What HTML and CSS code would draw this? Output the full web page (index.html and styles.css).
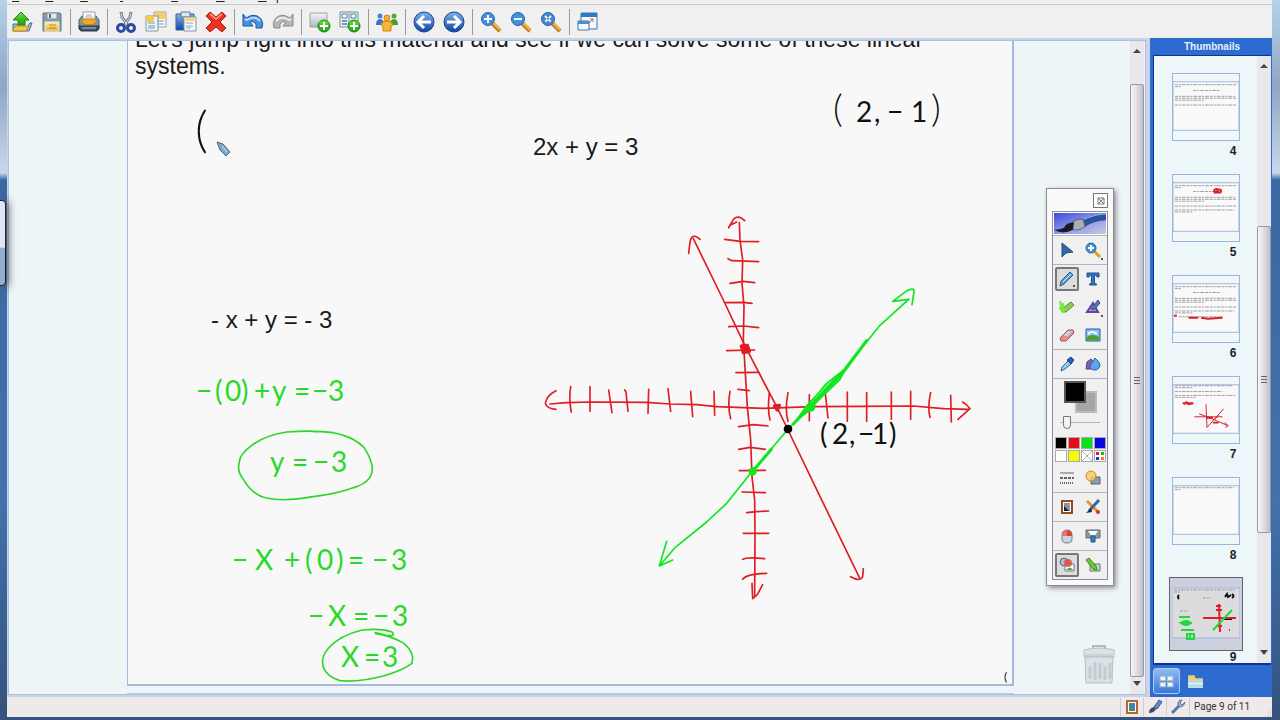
FILE: index.html
```
<!DOCTYPE html>
<html lang="en">
  <head>
    <meta charset="utf-8">
    <title>Notebook</title>
    <link rel="stylesheet" href="styles.css">
  </head>
  <body>
    <svg class="defs" width="0" height="0" aria-hidden="true">
      <defs>
        <linearGradient id="gBlue" x1="0" y1="0" x2="0" y2="1"><stop offset="0" stop-color="#7fb4ea"/><stop offset="1" stop-color="#0d44a8"/></linearGradient>
        <linearGradient id="gGreen" x1="0" y1="0" x2="0" y2="1"><stop offset="0" stop-color="#6fe03c"/><stop offset="1" stop-color="#1c9a10"/></linearGradient>
        <linearGradient id="gGold" x1="0" y1="0" x2="0" y2="1"><stop offset="0" stop-color="#fff3a8"/><stop offset="1" stop-color="#f0ac22"/></linearGradient>
        <linearGradient id="gGrey" x1="0" y1="0" x2="0" y2="1"><stop offset="0" stop-color="#f4f6f8"/><stop offset="1" stop-color="#aeb6be"/></linearGradient>
        <linearGradient id="gBanner" x1="0" y1="0" x2="1" y2="1"><stop offset="0" stop-color="#3d49d8"/><stop offset=".5" stop-color="#8b95ec"/><stop offset="1" stop-color="#c9cbe2"/></linearGradient>
      </defs>
    </svg>

    <nav class="menubar">
      <a href="#"><u>F</u>ile</a>
      <a href="#"><u>E</u>dit</a>
      <a href="#"><u>V</u>iew</a>
      <a href="#"><u>I</u>nsert</a>
      <a href="#">F<u>o</u>rmat</a>
      <a href="#"><u>D</u>raw</a>
      <a href="#"><u>H</u>elp</a>
    </nav>

    <div class="toolbar">
      <button aria-label="Open"><svg viewBox="0 0 22 22"><path d="M2 13h4l2 3h8l3-4h2l-3 8H2z" fill="#8fc4ec" stroke="#3a6f9f"/><path d="M2 18l3-3h13l-3 5H2z" fill="#f5c84a" stroke="#bb8a1c"/><path d="M10 1l8 8h-4v5H7V9H2z" fill="url(#gGreen)" stroke="#1b8a12"/></svg></button>
      <button aria-label="Save"><svg viewBox="0 0 22 22"><path d="M2 2h17l1 1v17H2z" fill="#8b9dad" stroke="#5f7383"/><path d="M6 2h10v6H6z" fill="#dfe8ef" stroke="#7d90a0"/><path d="M8 3h2v4H8z" fill="#54697b"/><path d="M4 11h14v9H4z" fill="url(#gGold)" stroke="#e8edf0"/><path d="M8 14h7M8 17h7" stroke="#b88a2c"/></svg></button>
      <span class="sep"></span>
      <button aria-label="Print"><svg viewBox="0 0 22 22"><path d="M1 9l3-4h14l3 4v7H1z" fill="#7d98ae" stroke="#3f5c74"/><path d="M5 1h12v10H5z" fill="#fff" stroke="#8ba0b1"/><path d="M8 4h6M7 6h8" stroke="#a0a8ae"/><path d="M4 8h14v4q-7 4-14 0z" fill="#f2a82d" stroke="#c37c10"/><path d="M1 15h20v3l-2 2H3l-2-2z" fill="#3e5063" stroke="#293a4a"/><path d="M4 17h14" stroke="#b7c5d0"/></svg></button>
      <span class="sep"></span>
      <button aria-label="Cut"><svg viewBox="0 0 22 22"><path d="M6 1l1 5 7 10M16 1l-1 5-7 10" fill="none" stroke="#6b7b89" stroke-width="3"/><path d="M6 2l1 4 6 9M16 2l-1 4-6 9" fill="none" stroke="#e0e8ee"/><circle cx="6" cy="17" r="3.5" fill="none" stroke="#2a49a5" stroke-width="3"/><circle cx="16" cy="17" r="3.5" fill="none" stroke="#2a49a5" stroke-width="3"/></svg></button>
      <button aria-label="Copy"><svg viewBox="0 0 22 22"><path d="M9 1h12v15H9z" fill="#fbfbf4" stroke="#8d9cab"/><path d="M9 2h12v6H9z" fill="#f8cf58"/><path d="M1 5h12v15H1z" fill="#eef4f9" stroke="#8596a6"/><path d="M1 5h8v6H1z" fill="#f5c94e"/><path d="M3 12h7M3 15h7M3 17h7M12 10h7M12 13h7" stroke="#6f9cc7"/></svg></button>
      <button aria-label="Paste"><svg viewBox="0 0 22 22"><path d="M1 3h18v16H1z" fill="url(#gBlue)" stroke="#33629a"/><path d="M6 1h9v5H6z" fill="#dfe6ec" stroke="#657789"/><path d="M9 6h12v14H9z" fill="#f6f9fc" stroke="#8192a2"/><path d="M9 7h12v3H9z" fill="#f5d67b"/><path d="M11 12h7M11 15h7M11 17h5" stroke="#85a8ca"/></svg></button>
      <button aria-label="Delete"><svg viewBox="0 0 22 22"><path d="M5 1l6 5 6-5 4 4-6 6 6 6-4 4-6-5-6 5-4-4 6-6-6-6z" fill="#e83226" stroke="#b81a14"/><path d="M5 3l6 5 6-5" fill="none" stroke="#ff8a72" stroke-width="2"/></svg></button>
      <span class="sep"></span>
      <button aria-label="Undo"><svg viewBox="0 0 22 22"><path d="M1 3l3 4q9-6 15 1 3 4 1 9h-6q1-5-2-6-2-1-4 0l3 4H1z" fill="#4b8fe0" stroke="#1c54a8"/><path d="M3 8l2 1q8-5 13 1" fill="none" stroke="#b4d8fa" stroke-width="2"/></svg></button>
      <button aria-label="Redo"><svg viewBox="0 0 22 22"><path d="M21 3l-3 4Q9 1 3 8q-3 4-1 9h6q-1-5 2-6 2-1 4 0l-3 4h10z" fill="#b4b7ba" stroke="#85898d"/><path d="M19 8l-2 1Q9 4 4 10" fill="none" stroke="#e8eaec" stroke-width="2"/></svg></button>
      <span class="sep"></span>
      <button aria-label="Add page"><svg viewBox="0 0 22 22"><path d="M1 2h17v14H1z" fill="url(#gGrey)" stroke="#9aa2a9"/><circle cx="15" cy="15" r="6" fill="url(#gGreen)" stroke="#158a12"/><path d="M15 11v8M11 15h8" stroke="#fff" stroke-width="2"/></svg></button>
      <button aria-label="Add columns"><svg viewBox="0 0 22 22"><path d="M1 1h18v15H1z" fill="#f1f4f6" stroke="#7d8a95"/><path d="M3 3h5v4H3zM12 3h5v4h-5z" fill="#fff" stroke="#3f83a8"/><path d="M3 10h5M3 13h5M12 10h5" stroke="#6c98b0" stroke-width="2"/><path d="M10 1v15" stroke="#7d8a95"/><circle cx="15" cy="15" r="6" fill="url(#gGreen)" stroke="#158a12"/><path d="M15 11v8M11 15h8" stroke="#fff" stroke-width="2"/></svg></button>
      <span class="sep"></span>
      <button aria-label="Meeting"><svg viewBox="0 0 22 22"><circle cx="4" cy="5" r="2.500" fill="#4a7fd0"/><path d="M0 14q0-6 4-6 3 0 4 4l-1 2z" fill="#3f72c4"/><circle cx="18" cy="5" r="2.500" fill="#52a83e"/><path d="M22 14q0-6-4-6-3 0-4 4l1 2z" fill="#45a032"/><circle cx="11" cy="7" r="3" fill="#f5b030" stroke="#d1840f"/><path d="M5 14q1-4 6-4t6 4l-2 1v5H7v-5z" fill="#f6b637" stroke="#d1840f"/></svg></button>
      <span class="sep"></span>
      <button aria-label="Previous page"><svg viewBox="0 0 22 22"><circle cx="11" cy="11" r="10" fill="url(#gBlue)" stroke="#1c3f8c"/><path d="M18 11H6M11 5l-6 6 6 6" fill="none" stroke="#fff" stroke-width="3"/></svg></button>
      <button aria-label="Next page"><svg viewBox="0 0 22 22"><circle cx="11" cy="11" r="10" fill="url(#gBlue)" stroke="#1c3f8c"/><path d="M4 11h12M11 5l6 6-6 6" fill="none" stroke="#fff" stroke-width="3"/></svg></button>
      <span class="sep"></span>
      <button aria-label="Zoom in"><svg viewBox="0 0 22 22"><path d="M12 12l8 8" stroke="#b9771a" stroke-width="4"/><path d="M13 12l7 7" stroke="#f8b83c" stroke-width="2"/><circle cx="8" cy="8" r="6.500" fill="#3f92e0" stroke="#2a62a4"/><path d="M8 4v8M4 8h8" stroke="#fff" stroke-width="2"/></svg></button>
      <button aria-label="Zoom out"><svg viewBox="0 0 22 22"><path d="M12 12l8 8" stroke="#b9771a" stroke-width="4"/><path d="M13 12l7 7" stroke="#f8b83c" stroke-width="2"/><circle cx="8" cy="8" r="6.500" fill="#3f92e0" stroke="#2a62a4"/><path d="M4 8h8" stroke="#fff" stroke-width="2"/></svg></button>
      <button aria-label="Fit page"><svg viewBox="0 0 22 22"><path d="M12 12l8 8" stroke="#b9771a" stroke-width="4"/><path d="M13 12l7 7" stroke="#f8b83c" stroke-width="2"/><circle cx="8" cy="8" r="6.500" fill="#3f88d4" stroke="#2a62a4"/><path d="M5 5l6 6M11 5l-6 6" stroke="#fff" stroke-width="2" stroke-dasharray="3 2"/></svg></button>
      <span class="sep"></span>
      <button aria-label="Transparent background"><svg viewBox="0 0 22 22"><path d="M4 2h16v16H4z" fill="#f5f9fc" stroke="#3574b4"/><path d="M4 2h16v4H4z" fill="#2e7ac4"/><path d="M1 10h11v9H1z" fill="#f5f9fc" stroke="#3574b4"/><path d="M1 10h11v3H1z" fill="#4a8fd0"/><path d="M12 12l4-4M13 8h3v3" fill="none" stroke="#e0562a"/></svg></button>
    </div>

    <main>
      <section class="workspace">
        <div class="board">
          <div class="page">
            <p class="intro">Let's jump right into this material and see if we can solve some of these linear systems.</p>
            <p class="eq eq-first">2x + y = 3</p>
            <p class="eq eq-second">- x + y = - 3</p>

            <svg class="ink" viewBox="0 0 884 643">
              <!-- pen answers -->
              <g class="pen black">
                <text x="67" y="106" class="tall">(</text>
                <text y="81"><tspan x="705" class="paren">(</tspan><tspan x="728">2</tspan><tspan x="746">,</tspan><tspan x="759">−</tspan><tspan x="783">1</tspan><tspan x="803" class="paren">)</tspan></text>
                <text y="403"><tspan x="692">(</tspan><tspan x="704">2</tspan><tspan x="721">,</tspan><tspan x="730">−</tspan><tspan x="744">1</tspan><tspan x="761">)</tspan></text>
                <text x="876" y="640" class="small">(</text>
              </g>
              <g class="pen green">
                <text y="360"><tspan x="68">−</tspan><tspan x="87">(</tspan><tspan x="97">0</tspan><tspan x="113">)</tspan><tspan x="126">+</tspan><tspan x="144">y</tspan><tspan x="166">=</tspan><tspan x="184">−</tspan><tspan x="200">3</tspan></text>
                <text y="431"><tspan x="142">y</tspan><tspan x="164">=</tspan><tspan x="185">−</tspan><tspan x="203">3</tspan></text>
                <text y="529"><tspan x="104">−</tspan><tspan x="127">X</tspan><tspan x="156">+</tspan><tspan x="177">(</tspan><tspan x="189">0</tspan><tspan x="208">)</tspan><tspan x="220">=</tspan><tspan x="244">−</tspan><tspan x="263">3</tspan></text>
                <text y="585"><tspan x="180">−</tspan><tspan x="200">X</tspan><tspan x="225">=</tspan><tspan x="245">−</tspan><tspan x="264">3</tspan></text>
                <text y="626"><tspan x="213">X</tspan><tspan x="236">=</tspan><tspan x="254">3</tspan></text>
              </g>

              <!-- rings round the two intercepts -->
              <svg x="52" y="329" width="260" height="320" viewBox="0 0 780 960">
                <g class="stroke ring">
                  <path d="M460 188Q400 180 320 186Q260 194 215 226Q178 254 178 276Q170 304 190 328Q218 376 260 384Q310 396 400 380Q470 372 524 352Q574 336 577 300Q578 272 552 232Q524 206 490 196Q450 182 400 185"/>
                  <path d="M586 788L618 796Q650 800 636 786Q606 774 546 780Q480 796 446 834Q420 862 430 892Q440 920 480 932Q534 938 610 918Q670 900 696 880Q706 850 672 820Q640 800 586 790"/>
                </g>
              </svg>

              <!-- axes and the two lines -->
              <svg x="402" y="159" width="460" height="410" viewBox="0 0 1380 1230">
                <g class="stroke red">
                  <path d="M628 68L630 120 638 180 636 250 642 320 640 420 646 520 652 620 662 720 666 830 674 900 675 1000 674 1190"/>
                  <path d="M596 84L600 76 620 66M596 82L612 56Q626 44 644 62M666 1150L668 1196 682 1184 698 1154"/>
                  <path d="M60 612L110 608 180 606 350 607 420 612 500 614 560 620 700 625 850 620 1000 619 1150 618 1240 626 1316 628"/>
                  <path d="M78 572Q50 586 46 610Q50 626 78 628M1298 606Q1312 614 1320 626L1284 658"/>
                  <path d="M584 118L630 124 686 125M594 176L606 182 686 185M600 250L640 244 674 248M586 308L640 307 666 310M596 380L640 378 686 383M590 452L674 450M618 518L686 517M624 568L658 572M626 680L670 674 714 678M626 748L660 742 706 748M628 812L706 811M636 876L706 878M650 938L680 935 716 933M640 1000L716 1000M638 1078Q650 1070 704 1076M638 1138Q650 1122 710 1120"/>
                  <path d="M122 560Q116 600 124 636M180 560V634M236 570L246 638M284 570L288 576 294 634M356 568L354 640M414 566L422 634M482 574L488 650M552 574L554 646M600 574Q592 620 602 656M718 580Q712 630 720 660M774 578Q764 630 774 664M838 584V662M886 580L894 654M952 576V664M1010 578V664M1084 576V658M1142 574V658M1202 578Q1192 620 1200 652M1262 586L1264 666"/>
                  <path d="M490 116L580 300 646 440 740 620 774 690 880 910 988 1132"/>
                  <path d="M476 160L480 126Q486 96 510 118M962 1130Q990 1146 998 1130L1000 1106"/>
                  <path d="M634 438L652 436 658 454 640 458zM734 618L748 616 742 630z" class="blob"/>
                </g>
                <g class="stroke green">
                  <path d="M1136 298L1050 376 1000 438 940 520 840 620 774 688 668 812 590 910 530 966 436 1042 390 1096"/>
                  <path d="M1136 298L1088 304 1128 274Q1154 260 1152 276L1146 314M410 1024L388 1098 428 1080"/>
                  <path d="M856 590L890 550 946 506 930 538 860 606 838 632 800 660 828 620z" class="half"/>
                  <path d="M1010 422L940 514 850 608 790 672M724 748L668 814" class="wide"/>
                  <circle cx="842" cy="622" r="11"/><circle cx="668" cy="814" r="10"/>
                </g>
                <circle cx="774" cy="687" r="13"/>
              </svg>

              <!-- pen cursor -->
              <path d="M89 101l6 2 7 8-4 4-6-6z" fill="#7fa6c4" stroke="#456b86"/>
              <path d="M94 105l5 6" stroke="#dbe8f2"/>
            </svg>
          </div>
          <div class="next-page"></div>
        </div>

        <svg class="trash" viewBox="0 0 32 42"><path d="M10 5V2h12v3" fill="none" stroke="#b3bcc1" stroke-width="2"/><path d="M1 6q15-4 30 0v7H1z" fill="#dce3e6" stroke="#b3bdc3"/><path d="M2 13h28l-1 26H3z" fill="#dbe2e6" stroke="#b5bfc5"/><path d="M2 11h28" stroke="#b9c3c8"/><path d="M7 22v13M12 18v18M17 19v16M22 22v14M27 19v16" stroke="#c3ccd1" stroke-width="3"/></svg>

        <div class="toolbox">
          <button class="close" aria-label="Close"><svg viewBox="0 0 8 8"><path d="M1 1h6v6H1zM1 1l6 6M7 1L1 7" fill="none" stroke="#777"/></svg></button>
          <div class="tools">
            <svg class="banner" viewBox="0 0 52 20" preserveAspectRatio="none"><path d="M0 0h52v20H0z" fill="url(#gBanner)"/><path d="M27 7Q38 1 52 0v7Q38 8 30 14z" fill="#2d51a0"/><path d="M17 10q5-5 12-4l2 7q-6 4-12 3z" fill="#aaaeb8" stroke="#686c78"/><path d="M20 9q-8 0-10 5-4 2-10 2 9 5 19 0z" fill="#191c25"/><path d="M30 6Q42 1 52 1" fill="none" stroke="#9bbdf0"/></svg>
            <div class="group">
              <button aria-label="Select"><svg viewBox="0 0 16 16"><path d="M3 1l11 9-7 1-4 4z" fill="#2e6ba8" stroke="#1e4a7c"/></svg></button>
              <button aria-label="Magnify" class="more"><svg viewBox="0 0 16 16"><path d="M9 9l6 6" stroke="#e59a20" stroke-width="3"/><circle cx="6" cy="6" r="5" fill="#3f92e0" stroke="#2a62a4"/><path d="M6 3v6M3 6h6" stroke="#fff" stroke-width="2"/></svg></button>
            </div>
            <div class="group">
              <button aria-label="Pen" class="on more"><svg viewBox="0 0 16 16"><path d="M1 15l1-5 9-9 3 3-9 9z" fill="#5c9dd6" stroke="#2a5d8e"/><path d="M4 11l8-8" stroke="#d8ecfa"/></svg></button>
              <button aria-label="Text"><svg viewBox="0 0 16 16"><path d="M2 2h12v4h-2l-1-2H9.500v8l2 1v1h-7v-1l2-1V4H5L4 6H2z" fill="#2f78c0" stroke="#1d5492"/></svg></button>
              <button aria-label="Creative pen"><svg viewBox="0 0 16 16"><path d="M3 13l1-4 8-6 3 3-8 7z" fill="#88cc50" stroke="#4f9428"/><path d="M1 2l3 12M4 4l1 9M0 8l4 5" stroke="#74e83a" stroke-width="2"/></svg></button>
              <button aria-label="Shape pen" class="more"><svg viewBox="0 0 16 16"><path d="M2 13L8 4l5 9z" fill="#b9a4cc" stroke="#693f98" stroke-width="2"/><path d="M6 10l7-9 2 3-6 7z" fill="#4d75c0" stroke="#334f8c"/></svg></button>
              <button aria-label="Eraser"><svg viewBox="0 0 16 16"><path d="M1 11l8-8h5l1 3-8 8H2z" fill="#e58d8d" stroke="#9c5a5a"/><path d="M9 4h5l-5 5H4z" fill="#c9ced2"/></svg></button>
              <button aria-label="Picture"><svg viewBox="0 0 16 16"><path d="M1 2h14v12H1z" fill="#85c2f2" stroke="#2a5f94"/><path d="M2 10q6-4 12 0v3H2z" fill="#4da02c"/><path d="M3 7q4-4 9 0" stroke="#fff" fill="none" stroke-width="2"/></svg></button>
            </div>
            <div class="group">
              <button aria-label="Eyedropper"><svg viewBox="0 0 16 16"><path d="M2 15l1-4 6-6 3 3-6 5z" fill="#9cc8ee" stroke="#34659a"/><path d="M8 4l4-3 3 3-3 4z" fill="#2b63b0" stroke="#1b4686"/></svg></button>
              <button aria-label="Fill"><svg viewBox="0 0 16 16"><path d="M1 13l1-7 4-3 3 4-3 6z" fill="#8160a8" stroke="#5a3c80"/><path d="M10 2q5 4 5 7-1 5-5 5-5 0-5-4 2-3 5-8z" fill="#5da4e8" stroke="#2862a4"/></svg></button>
            </div>
            <div class="colours">
              <button class="current" aria-label="Line colour"></button>
              <button class="second" aria-label="Fill colour"></button>
            </div>
            <input type="range" class="width" aria-label="Line width" min="0" max="10" value="1">
            <div class="palette">
              <button class="c-black" aria-label="Black"></button>
              <button class="c-red" aria-label="Red"></button>
              <button class="c-green" aria-label="Green"></button>
              <button class="c-blue" aria-label="Blue"></button>
              <button class="c-white" aria-label="White"></button>
              <button class="c-yellow" aria-label="Yellow"></button>
              <button class="c-none" aria-label="No colour"><svg viewBox="0 0 10 10"><path d="M0 0l10 10M10 0L0 10" stroke="#b2b2b2"/></svg></button>
              <button class="c-more" aria-label="More colours"><svg viewBox="0 0 10 10"><path d="M1 1h3v3H1z" fill="#e02020"/><path d="M6 1h3v3H6z" fill="#20b030"/><path d="M1 6h3v3H1z" fill="#2030d0"/><path d="M6 6h3v3H6z" fill="#f08020"/></svg></button>
            </div>
            <div class="group">
              <button aria-label="Line style"><svg viewBox="0 0 16 16"><path d="M1 3h14" stroke="#666"/><path d="M1 8h14" stroke="#666" stroke-width="2" stroke-dasharray="3 1"/><path d="M1 13h14" stroke="#666" stroke-width="2" stroke-dasharray="1 1"/></svg></button>
              <button aria-label="Shapes"><svg viewBox="0 0 16 16"><path d="M6 7h9v7H6z" fill="#8b9fb4" stroke="#4f6477"/><circle cx="6" cy="6" r="5" fill="#f7cd60" stroke="#c38c20" fill-opacity=".8"/></svg></button>
            </div>
            <div class="group">
              <button aria-label="Gallery"><svg viewBox="0 0 16 16"><path d="M3 2h10v12H3z" fill="#fff" stroke="#8d4d1e" stroke-width="2"/><path d="M5 4h6v8H5z" fill="#6d97c4"/><path d="M5 7l5 5H5z" fill="#222"/><path d="M8 5h3v4z" fill="#f09030"/></svg></button>
              <button aria-label="Draw tools"><svg viewBox="0 0 16 16"><path d="M2 2l11 11" stroke="#e79520" stroke-width="3"/><path d="M14 1L4 12" stroke="#2f66a8" stroke-width="3"/><path d="M6 9l-5 5 6-1z" fill="#1e2f44"/><circle cx="13" cy="13" r="2" fill="#d8342a"/></svg></button>
            </div>
            <div class="group">
              <button aria-label="Mouse"><svg viewBox="0 0 16 16"><path d="M3 7q0-5 5-5t5 5v4q0 4-5 4t-5-4z" fill="#c8d6e4" stroke="#6a7c8e"/><path d="M3 8q0-6 5-6v6z" fill="#ec7460"/><path d="M8 8V2q5 0 5 6z" fill="#d84432"/></svg></button>
              <button aria-label="Capture"><svg viewBox="0 0 16 16"><path d="M1 2h14v8H1z" fill="#8d999f" stroke="#616d75"/><path d="M3 3h10l-3 4H6z" fill="#fff"/><path d="M6 8h4v6H6z" fill="#3282c4" stroke="#17588e"/></svg></button>
            </div>
            <div class="group">
              <button aria-label="Object mode" class="on"><svg viewBox="0 0 16 16"><path d="M6 7h9v7H6z" fill="#fff" stroke="#697783"/><path d="M7 13q4-5 7 0z" fill="#48b030"/><circle cx="5" cy="5" r="4" fill="#aabbc9" stroke="#5a6d7c"/><circle cx="9" cy="6" r="4" fill="#d84e44" fill-opacity=".85"/></svg></button>
              <button aria-label="Ink mode"><svg viewBox="0 0 16 16"><path d="M5 7h10v7H5z" fill="#c7d4c7" stroke="#697783"/><path d="M1 3l3-2 7 8 1 4-4-1z" fill="#6cc838" stroke="#3a8a1a"/></svg></button>
            </div>
          </div>
        </div>

        <div class="scroll main-scroll"><span class="up"></span><div class="track"><span class="bar"></span></div><span class="down"></span></div>
      </section>

      <aside class="side">
        <h2>Thumbnails</h2>
        <div class="pane">
          <ol class="thumbs">
            <li><svg viewBox="0 0 68 68"><path class="sheet" d="M0 8h68v50H0z"/><path class="type" d="M2 11h64M2 13h6M21 17h28M2 23h62M2 25h64M2 27h31M2 32h63"/></svg><span>4</span></li>
            <li><svg viewBox="0 0 68 68"><path class="sheet" d="M0 8h68v50H0z"/><path class="type" d="M2 11h64M2 13h6M21 17h28M2 23h62M2 25h64M2 27h31M2 32h63M2 36h61M2 38h18"/><path class="mark" d="M42 17q1-4 5-2 4 0 2 3h-7l5-2"/></svg><span>5</span></li>
            <li><svg viewBox="0 0 68 68"><path class="sheet" d="M0 8h68v50H0z"/><path class="type" d="M2 11h64M2 13h6M21 17h28M2 23h62M2 25h64M2 27h31M2 32h63M2 36h61M2 38h18M6 42h45"/><path class="mark" d="M1 41h3M16 43h10M29 43l7 1 15-1"/></svg><span>6</span></li>
            <li><svg viewBox="0 0 68 68"><path class="sheet" d="M0 8h68v50H0z"/><path class="type" d="M2 9h60M2 11h18M2 15h49M2 19h62M2 21h21"/><path class="mark" d="M10 27h11M11 28l3-2 2 2 5-1M34 42h7M41 47h6"/><path class="mark thin" d="M34 28l1 24M22 41h29M35 52l17-19M27 38l11 4 18 8M53 47l4 3-3 2M43 44l4-5"/></svg><span>7</span></li>
            <li><svg viewBox="0 0 68 68"><path class="sheet" d="M0 8h68v50H0z"/><path class="type" d="M2 10h61M2 12h6"/></svg><span>8</span></li>
            <li class="current"><svg viewBox="0 0 68 68"><path class="sheet" d="M0 8h68v50H0z"/><path class="type" d="M2 10h61M2 12h6M31 18h8M8 31h8"/><path d="M7 15q-2 2 0 4M53 17l2-3 1 3 3-2M60 14q3 2 0 4M52 39h8" fill="none" stroke="#111" stroke-width="2"/><path class="mark" d="M31 38h33M47 24l1 28M44 26h5M44 30h6M45 46h5M57 50h1"/><path class="mark lime" d="M41 50l19-20M7 37h11M9 43q5-4 10 0-5 4-10 0h9M9 50h13M15 54h7v5h-7zM18 54v5"/></svg><span>9</span></li>
          </ol>
          <div class="scroll side-scroll"><span class="up"></span><div class="track"><span class="bar"></span></div><span class="down"></span></div>
        </div>
        <div class="tabs">
          <button class="on" aria-label="Page sorter"><svg viewBox="0 0 16 16"><path d="M2 3h5v4H2zM9 3h5v4H9zM2 9h5v4H2zM9 9h5v4H9z" fill="#f3f8ee" stroke="#a9c0d8"/></svg></button>
          <button aria-label="Gallery"><svg viewBox="0 0 16 16"><path d="M1 2h6l1 3h7v9H1z" fill="#e8d272"/><path d="M1 7h14v7H1z" fill="#b8dcf0"/><path d="M1 10h14" stroke="#eef8fc"/></svg></button>
        </div>
      </aside>
    </main>

    <footer class="status">
      <button aria-label="Gallery"><svg viewBox="0 0 16 16"><path d="M3 2h10v12H3z" fill="#fff" stroke="#b5682a" stroke-width="2"/><path d="M5 4h6v8H5z" fill="#3f86b8"/><path d="M5 8l5 4H5z" fill="#2c9a50"/></svg></button>
      <button aria-label="Pens"><svg viewBox="0 0 16 16"><path d="M7 8l5-7 3 2-5 7z" fill="#5e88d8" stroke="#34559c"/><path d="M2 14q0-5 5-6l2 2q-2 4-7 4z" fill="#404a5c"/></svg></button>
      <button aria-label="Settings"><svg viewBox="0 0 16 16"><path d="M2 14l7-7" stroke="#58799b" stroke-width="3"/><path d="M15 3l-3 3-2-2 2-3q-5 0-4 6 5 3 7-4z" fill="#9ab3ca" stroke="#58799b"/></svg></button>
      <span class="count">Page 9 of 11</span>
      <svg class="grip" viewBox="0 0 8 8"><path d="M6 1h1M4 4h1M6 4h1M1 7h1M4 7h1M6 7h1" stroke="#b9b3b5"/></svg>
    </footer>

    <div class="drawer"></div>
  </body>
</html>
```
FILE: styles.css
```
* {box-sizing: border-box; margin: 0; padding: 0;}
body {
  display: flex;
  flex-direction: column;
  position: relative;
  height: 100vh;
  overflow: hidden;
  padding: 0 8px 3px 7px;
  background: linear-gradient(#b4d2ea, #8fa6c4 12%, #c8d8ea 24%, #3a68a2 25%, #4271ac 70%, #34537c);
  font-family: "Liberation Sans", Arial, sans-serif;
}
button {border: 0; background: none; display: flex; align-items: center; justify-content: center;}
ol {list-style: none;}
.defs {position: absolute;}

.menubar {
  display: flex;
  align-items: flex-end;
  gap: 14px;
  flex: none;
  height: 4px;
  padding-left: 5px;
  overflow: hidden;
  background: #f0f0f0;
}
.menubar a {font-size: 12px; line-height: 16px; color: #222; text-decoration: none;}

.toolbar {
  display: flex;
  align-items: center;
  flex: none;
  height: 34px;
  border-top: 1px solid #c9c9c9;
  background: #f0f0f0;
}
.toolbar button {width: 30px; height: 30px;}
.toolbar svg {width: 22px; height: 22px;}
.sep {width: 1px; height: 26px; margin: 0 3px; background: #999;}

main {
  display: flex;
  flex: 1;
  min-height: 0;
  background: #cbd3e8;
}
.workspace {
  display: flex;
  position: relative;
  flex: 1;
  margin: 2px 4px 2px 1px;
  border: 1px solid #a9bfe6;
  background: #edf5f7;
}
.board {
  display: flex;
  flex-direction: column;
  flex: 1;
  padding: 0 116px 0 118px;
}
.page {
  position: relative;
  flex: 1;
  overflow: hidden;
  border: solid #a5b9dc;
  border-width: 0 2px 2px 1px;
  background: #f8f8f8;
}
.next-page {height: 8px; border-bottom: 1px solid #b9cae6;}
.intro, .eq {line-height: 27px; color: #1a1a1a;}
.intro {margin-top: -15px; padding: 0 60px 0 7px; font-size: 23px;}
/* objects dropped on the page */
.eq {position: absolute; font-size: 24px; white-space: nowrap;}
.eq-first {left: 405px; top: 92px;}
.eq-second {left: 83px; top: 265px;}
.ink {position: absolute; left: 0; top: 0; width: 884px; height: 643px;}

.pen {font-family: Lato, "Liberation Sans", sans-serif; font-size: 28px; font-weight: 400;}
.pen.black {fill: #111;}
.pen.green {fill: #2ad82a;}
.pen .tall {font-size: 50px; font-weight: 300;}
.pen .paren {font-size: 38px; font-weight: 300;}
.pen .small {font-size: 12px;}
.stroke {fill: none; stroke-width: 5; stroke-linecap: round; stroke-linejoin: round;}
.stroke.ring {stroke: #2ad82a;}
.stroke.red {stroke: #e01c24;}
.stroke.green {stroke: #0be81c;}
.stroke .blob {fill: #f01018; stroke-width: 10;}
.stroke .half {fill: #0be81c; fill-opacity: .5;}
.stroke .wide {stroke-width: 9;}
.stroke circle {fill: #0be81c;}

.trash {position: absolute; right: 30px; bottom: 8px; width: 32px; height: 42px;}

.toolbox {
  position: absolute;
  right: 31px;
  top: 147px;
  width: 68px;
  padding: 4px 5px 5px;
  border: 1px solid #8c8c90;
  background: #fafafa;
  box-shadow: 2px 2px 5px #8a8a92;
}
.toolbox .close {width: 15px; height: 15px; margin: 0 0 3px auto; border: 1px solid #777; background: #fff;}
.close svg {width: 8px; height: 8px;}
.tools {border: 1px solid #8d8d93; background: #f0f0f0;}
.banner {display: block; width: 100%; height: 23px; border: 1px solid #fff;}
.group {
  display: grid;
  grid-template-columns: 24px 24px;
  grid-auto-rows: 24px;
  justify-content: center;
  gap: 4px 2px;
  padding: 2px 0;
  border-top: 1px solid #b4b4b8;
}
.group button {position: relative;}
.group svg {width: 16px; height: 16px;}
.group .on {border: 2px solid #777; border-radius: 2px; background: #dcdcdc;}
.more::after {
  content: "";
  position: absolute;
  right: 2px;
  bottom: 2px;
  border: 1px solid #555;
}
.colours {display: flex; height: 36px; padding: 2px 0 0 11px; border-top: 1px solid #b4b4b8;}
.colours button {width: 22px; height: 22px;}
.current {z-index: 1;}
.colours .current {border: 2px solid #555; background: #000;}
.colours .second {margin: 10px 0 0 -11px; border: 2px solid #bbb; background: #a6a6a6;}
.width {display: block; appearance: none; width: 40px; height: 17px; margin: 0 auto 6px; background: linear-gradient(#b5b5b5, #b5b5b5) center / 100% 1px no-repeat;}
.width::-webkit-slider-thumb {
  appearance: none;
  width: 8px;
  height: 13px;
  border: 1px solid #777;
  border-radius: 0 0 4px 4px;
  background: #f4f4f4;
}
.palette {display: grid; grid-template-columns: repeat(4, 12px); gap: 1px; justify-content: center; padding-bottom: 2px;}
.palette button {height: 12px; border: 1px solid #aaa;}
.palette svg {width: 10px; height: 10px;}
.palette + .group {border-top: 0;}
.c-black {background: #000;}
.c-red {background: #e80c14;}
.c-green {background: #0ce01c;}
.c-blue {background: #0808e0;}
.c-white, .c-none, .c-more {background: #fff;}
.c-yellow {background: #fafa00;}

.scroll {display: flex; flex-direction: column; flex: none; width: 14px; background: #e8e8ea;}
.up, .down {
  align-self: center;
  width: 0;
  height: 8px;
  margin: 4px 0;
  border: 4px solid transparent;
}
.up {border-top-width: 3px; border-bottom-color: #444;}
.down {border-top: 5px solid #444;}
.track {display: flex; flex: 1;}
.bar {
  flex: 1;
  border: 1px solid #999;
  border-radius: 2px;
  background:
    repeating-linear-gradient(#666 0 1px, transparent 1px 3px) center / 6px 7px no-repeat,
    linear-gradient(90deg, #f6f6f6, #dedee2 50%, #bfbfc8);
}
.main-scroll {margin-right: 1px;}
.main-scroll .track {padding-top: 27px;}
.side-scroll .track {padding: 154px 0 113px;}

.side {
  display: flex;
  flex-direction: column;
  flex: none;
  width: 122px;
  padding: 0 1px 0 3px;
  background: #2e6bcf;
}
.side h2 {font-size: 10px; line-height: 17px; color: #e4efff; text-align: center;}
.pane {
  display: flex;
  flex: 1;
  min-height: 0;
  border: solid #12309a;
  border-width: 1px 0 2px 1px;
  background: #edf6f8;
}
.thumbs {flex: 1; padding: 17px 0 0; overflow: hidden;}
.thumbs li {display: flex; flex-direction: column; align-items: center; height: 101px;}
.thumbs svg {width: 68px; height: 68px; border: 1px solid #9bb5de; background: #f0f7fa;}
.thumbs span {width: 62px; font-size: 12px; line-height: 21px; text-align: right; color: #222; font-weight: bold;}
.thumbs .current {height: 88px;}
.thumbs .current svg {width: 74px; height: 74px; margin-top: -1px; padding: 2px; border: 1px solid #626270; background: #ccd0dd;}
.thumbs .current span {line-height: 13px;}
.sheet {fill: #f9f9f9; stroke: #9bb5de;}
.current .sheet {fill: #dcdcde;}
.type {fill: none; stroke: #9b9b9f; stroke-dasharray: 3 1 2 1 4 1;}
.mark {fill: none; stroke: #dc1e28; stroke-width: 2;}
.mark.thin {stroke-width: 1;}
.mark.lime {stroke: #20d83c;}

.tabs {display: flex; align-items: center; gap: 2px; height: 32px;}
.tabs button {width: 27px; height: 26px;}
.tabs svg {width: 17px; height: 17px;}
.tabs .on {border: 1px solid #a9ccf8; border-radius: 3px; background: linear-gradient(#8fbcf4, #3a78d8);}

.status {
  display: flex;
  align-items: center;
  justify-content: flex-end;
  flex: none;
  height: 20px;
  background: #f0e9ea;
}
.status button {width: 23px; height: 18px; border-left: 1px solid #d2cbcd;}
.status svg {width: 16px; height: 16px;}
.count {width: 75px; padding-left: 4px; border-left: 1px solid #d2cbcd; font-family: Roboto, sans-serif; font-size: 10px; line-height: 18px; color: #333;}
.status .grip {align-self: flex-end; width: 8px; height: 8px;}

/* slide-out tab docked on the screen edge */
.drawer {
  position: absolute;
  left: -4px;
  top: 200px;
  width: 10px;
  height: 86px;
  border: 1px solid #14233a;
  border-radius: 4px;
  background: linear-gradient(#dfe6f2 55%, #94aed2 56%);
  box-shadow: 2px 1px 9px #555;
}
```
